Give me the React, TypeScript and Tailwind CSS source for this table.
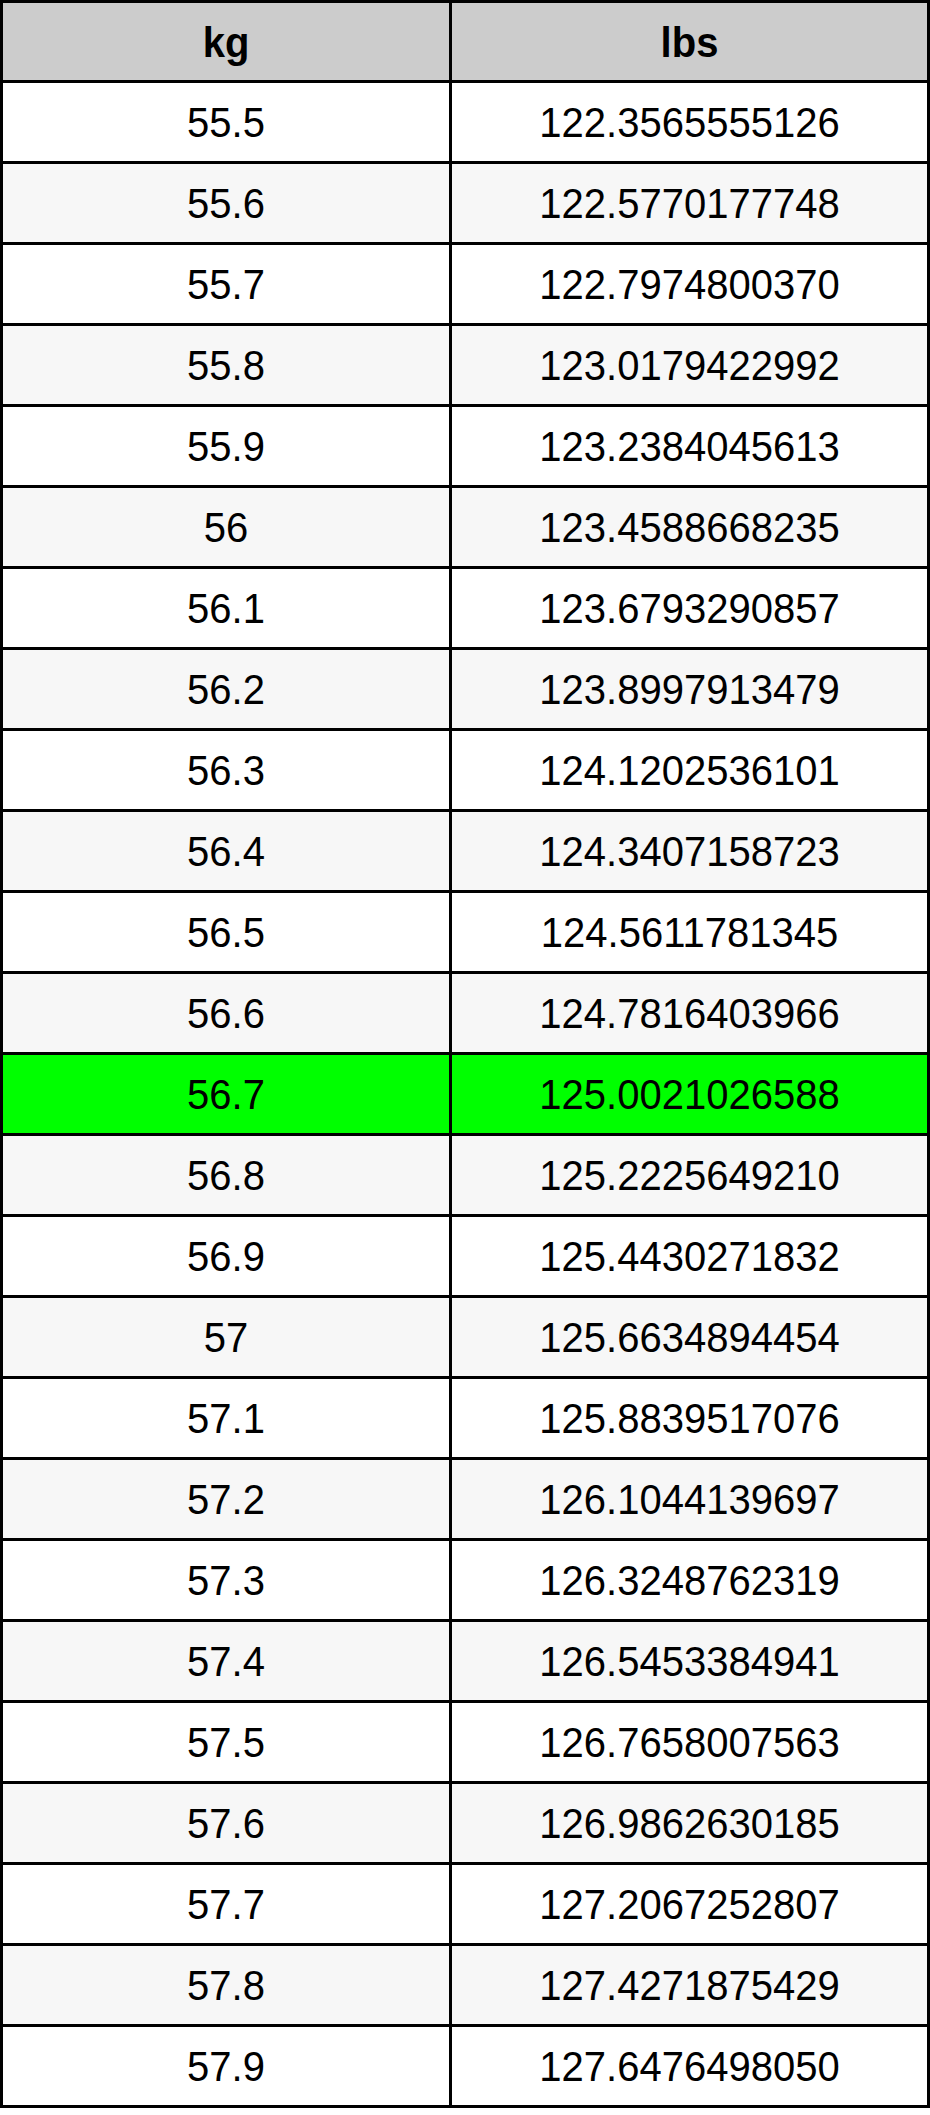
import React from "react";

const rows: [string, string][] = [
  ["55.5", "122.3565555126"],
  ["55.6", "122.5770177748"],
  ["55.7", "122.7974800370"],
  ["55.8", "123.0179422992"],
  ["55.9", "123.2384045613"],
  ["56", "123.4588668235"],
  ["56.1", "123.6793290857"],
  ["56.2", "123.8997913479"],
  ["56.3", "124.1202536101"],
  ["56.4", "124.3407158723"],
  ["56.5", "124.5611781345"],
  ["56.6", "124.7816403966"],
  ["56.7", "125.0021026588"],
  ["56.8", "125.2225649210"],
  ["56.9", "125.4430271832"],
  ["57", "125.6634894454"],
  ["57.1", "125.8839517076"],
  ["57.2", "126.1044139697"],
  ["57.3", "126.3248762319"],
  ["57.4", "126.5453384941"],
  ["57.5", "126.7658007563"],
  ["57.6", "126.9862630185"],
  ["57.7", "127.2067252807"],
  ["57.8", "127.4271875429"],
  ["57.9", "127.6476498050"],
];

export default function App() {
  return (
    <div className="bg-white w-[930px] font-['Liberation_Sans',Arial,sans-serif] text-black">
      <div className="w-[930px] border-[3px] border-black">
        <div className="flex h-[80px] border-b-[3px] border-black bg-[#cccccc] text-[40px] font-bold">
          <div className="w-[449px] border-r-[3px] border-black flex items-center justify-center">
            <span className="inline-block scale-y-[1.08]">kg</span>
          </div>
          <div className="flex-1 flex items-center justify-center">
            <span className="inline-block scale-y-[1.08]">lbs</span>
          </div>
        </div>
        {rows.map(([kg, lbs], i) => {
          const highlight = kg === "56.7";
          const bg = highlight ? "bg-[#00ff00]" : i % 2 === 0 ? "bg-white" : "bg-[#f7f7f7]";
          const last = i === rows.length - 1;
          return (
            <div
              key={kg}
              className={`flex text-[40px] ${bg} ${last ? "h-[78px]" : "h-[81px] border-b-[3px] border-black"}`}
            >
              <div className="w-[449px] border-r-[3px] border-black flex items-center justify-center">
                <span className="inline-block scale-y-[1.05]">{kg}</span>
              </div>
              <div className="flex-1 flex items-center justify-center">
                <span className="inline-block scale-y-[1.05]">{lbs}</span>
              </div>
            </div>
          );
        })}
      </div>
    </div>
  );
}
